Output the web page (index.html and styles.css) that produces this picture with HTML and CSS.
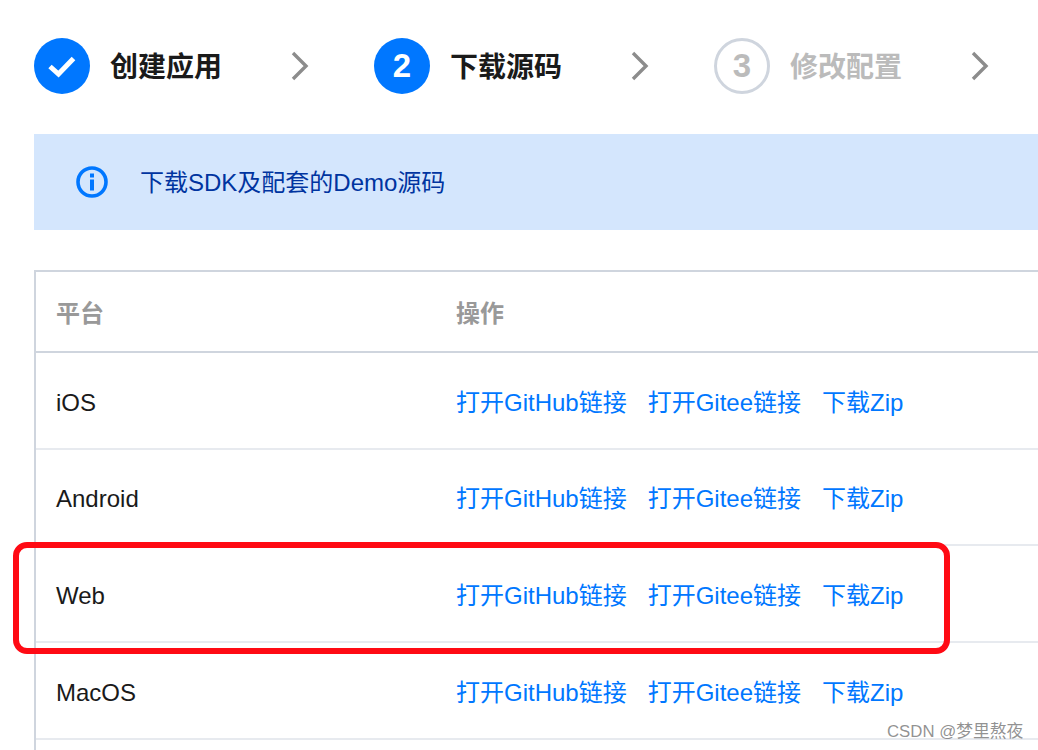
FILE: index.html
```html
<!DOCTYPE html>
<html lang="zh-CN">
<head>
	<meta charset="utf-8" />
	<title>下载源码</title>
	<link rel="stylesheet" href="styles.css">
</head>
<body>
	<div class="steps">
		<div class="step done">
			<span class="step-icon">
				<svg width="30" height="24" viewBox="0 0 30 24"><path d="M3 12.5 L11.5 20 L26.5 4.5" fill="none" stroke="#fff" stroke-width="5"/></svg>
			</span>
			<span class="step-label">创建应用</span>
		</div>
		<svg class="chevron" width="18" height="30" viewBox="0 0 18 30"><path d="M2 2 L15 15 L2 28" fill="none" stroke="#8c8c8c" stroke-width="3.4"/></svg>
		<div class="step active">
			<span class="step-icon">2</span>
			<span class="step-label">下载源码</span>
		</div>
		<svg class="chevron" width="18" height="30" viewBox="0 0 18 30"><path d="M2 2 L15 15 L2 28" fill="none" stroke="#8c8c8c" stroke-width="3.4"/></svg>
		<div class="step todo">
			<span class="step-icon">3</span>
			<span class="step-label">修改配置</span>
		</div>
		<svg class="chevron" width="18" height="30" viewBox="0 0 18 30"><path d="M2 2 L15 15 L2 28" fill="none" stroke="#8c8c8c" stroke-width="3.4"/></svg>
	</div>

	<div class="alert">
		<svg class="alert-icon" width="32" height="32" viewBox="0 0 32 32">
			<circle cx="16" cy="16" r="14" fill="none" stroke="#0077ff" stroke-width="3.6"/>
			<rect x="14" y="7.5" width="4" height="4" fill="#0077ff"/>
			<rect x="14" y="13.5" width="4" height="11" fill="#0077ff"/>
		</svg>
		<span class="alert-text">下载SDK及配套的Demo源码</span>
	</div>

	<table class="sdk-table">
		<tr>
			<th class="col-platform">平台</th>
			<th>操作</th>
		</tr>
		<tr>
			<td class="platform">iOS</td>
			<td class="links"><a href="#">打开GitHub链接</a><a href="#">打开Gitee链接</a><a href="#">下载Zip</a></td>
		</tr>
		<tr>
			<td class="platform">Android</td>
			<td class="links"><a href="#">打开GitHub链接</a><a href="#">打开Gitee链接</a><a href="#">下载Zip</a></td>
		</tr>
		<tr>
			<td class="platform">Web</td>
			<td class="links"><a href="#">打开GitHub链接</a><a href="#">打开Gitee链接</a><a href="#">下载Zip</a></td>
		</tr>
		<tr>
			<td class="platform">MacOS</td>
			<td class="links"><a href="#">打开GitHub链接</a><a href="#">打开Gitee链接</a><a href="#">下载Zip</a></td>
		</tr>
		<tr class="row-cut">
			<td></td>
			<td></td>
		</tr>
	</table>

	<div class="highlight"></div>
	<div class="watermark">CSDN @梦里熬夜</div>
</body>
</html>
```

FILE: styles.css
```css
html, body {
	height: 750px;
	overflow: hidden;
}
body {
	position: relative;
	margin: 0;
	padding: 38px 0 0 34px;
	box-sizing: border-box;
	background: #fff;
	color: #1a1a1a;
	font-family: "Liberation Sans", "Noto Sans CJK SC", sans-serif;
	font-size: 24px;
}
/*-------------------*/
.steps {
	display: flex;
	align-items: center;
	height: 56px;
}
.step {
	display: flex;
	align-items: center;
	gap: 20px;
}
.step-icon {
	display: flex;
	align-items: center;
	justify-content: center;
	width: 56px;
	height: 56px;
	box-sizing: border-box;
	border-radius: 50%;
	background: #0077ff;
	color: #fff;
	font-size: 33px;
	font-weight: bold;
}
.step-label {
	width: 111px;
	padding-bottom: 2px;
	font-size: 28px;
	font-weight: bold;
	white-space: nowrap;
}
.todo .step-icon {
	border: 3px solid #cfd5de;
	background: #fff;
	color: #bbb;
}
.todo .step-label {
	color: #bbb;
}
.chevron {
	flex: none;
	margin: 0 65px 0 70px;
}
/*-------------------*/
.alert {
	display: flex;
	align-items: center;
	gap: 32px;
	height: 96px;
	margin-top: 40px;
	padding-left: 42px;
	background: #d4e6fd;
}
.alert-icon {
	flex: none;
}
.alert-text {
	padding-bottom: 4px;
	color: #0034a0;
}
/*-------------------*/
.sdk-table {
	width: 1004px;
	margin-top: 40px;
	border-collapse: separate;
	border-spacing: 0;
	border-top: 2px solid #cfd5de;
	border-left: 2px solid #cfd5de;
}
.sdk-table th,
.sdk-table td {
	box-sizing: border-box;
	height: 96.67px;
	padding: 0 0 0 20px;
	border-bottom: 2px solid #e7eaef;
	font-weight: normal;
	text-align: left;
}
.sdk-table th {
	height: 81px;
	border-bottom-color: #cfd5de;
	color: #999;
	font-weight: bold;
}
.col-platform {
	width: 400px;
}
.sdk-table .platform {
	padding-top: 5px;
}
.links a {
	margin-right: 21px;
	color: #0077ff;
	text-decoration: none;
}
.sdk-table .row-cut td {
	height: 10px;
	border-bottom: 0;
}
/*-------------------*/
.highlight {
	position: absolute;
	left: 13px;
	top: 542px;
	width: 937px;
	height: 112px;
	box-sizing: border-box;
	border: 6px solid #ff0a14;
	border-radius: 14px;
}
.watermark {
	position: absolute;
	left: 887px;
	top: 718px;
	color: rgba(110, 110, 110, 0.75);
	font-size: 16.8px;
	white-space: nowrap;
}
```
